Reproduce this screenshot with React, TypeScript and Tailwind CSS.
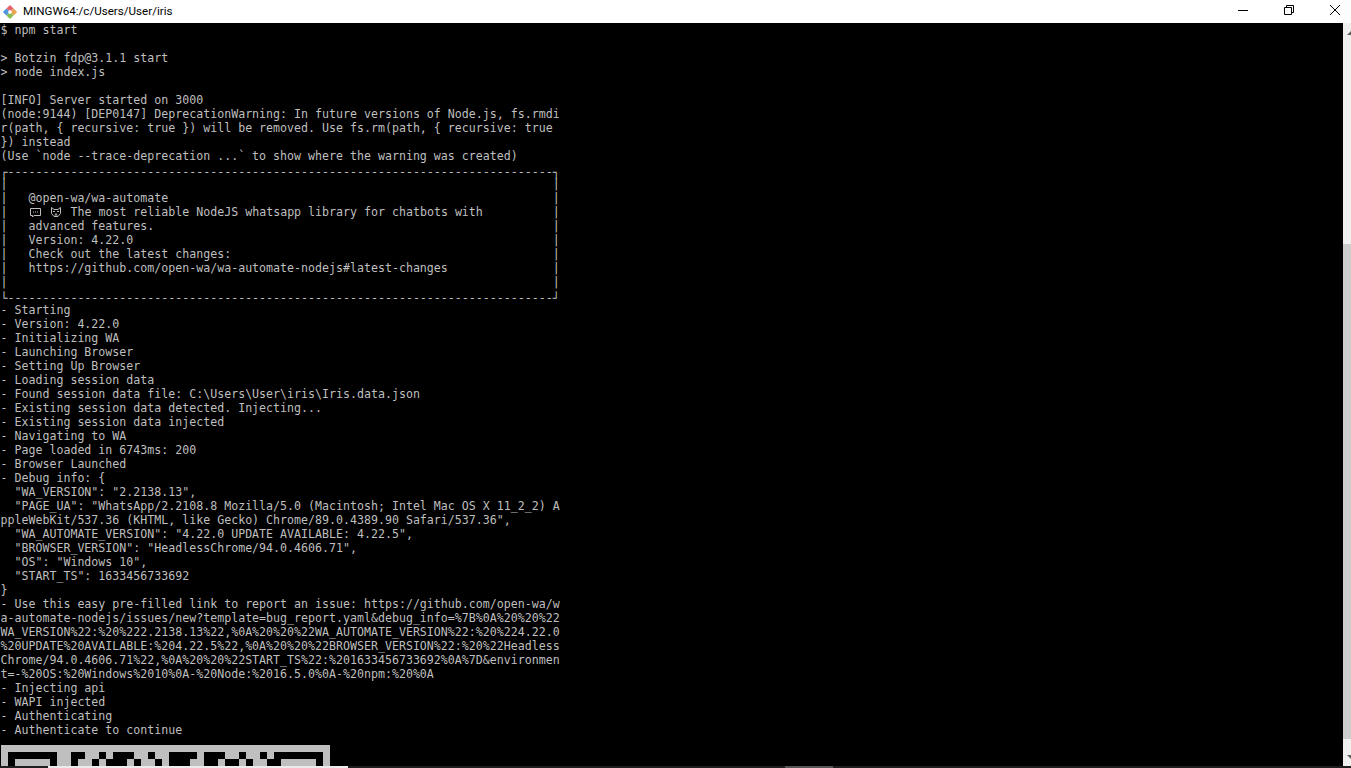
const top = [
  "$ npm start",
  "",
  "> Botzin fdp@3.1.1 start",
  "> node index.js",
  "",
  "[INFO] Server started on 3000",
  "(node:9144) [DEP0147] DeprecationWarning: In future versions of Node.js, fs.rmdi",
  "r(path, { recursive: true }) will be removed. Use fs.rm(path, { recursive: true",
  "}) instead",
  "(Use `node --trace-deprecation ...` to show where the warning was created)",
];

const bottom = [
  "- Starting",
  "- Version: 4.22.0",
  "- Initializing WA",
  "- Launching Browser",
  "- Setting Up Browser",
  "- Loading session data",
  "- Found session data file: C:\\Users\\User\\iris\\Iris.data.json",
  "- Existing session data detected. Injecting...",
  "- Existing session data injected",
  "- Navigating to WA",
  "- Page loaded in 6743ms: 200",
  "- Browser Launched",
  "- Debug info: {",
  '  "WA_VERSION": "2.2138.13",',
  '  "PAGE_UA": "WhatsApp/2.2108.8 Mozilla/5.0 (Macintosh; Intel Mac OS X 11_2_2) A',
  'ppleWebKit/537.36 (KHTML, like Gecko) Chrome/89.0.4389.90 Safari/537.36",',
  '  "WA_AUTOMATE_VERSION": "4.22.0 UPDATE AVAILABLE: 4.22.5",',
  '  "BROWSER_VERSION": "HeadlessChrome/94.0.4606.71",',
  '  "OS": "Windows 10",',
  '  "START_TS": 1633456733692',
  "}",
  "- Use this easy pre-filled link to report an issue: https://github.com/open-wa/w",
  "a-automate-nodejs/issues/new?template=bug_report.yaml&debug_info=%7B%0A%20%20%22",
  "WA_VERSION%22:%20%222.2138.13%22,%0A%20%20%22WA_AUTOMATE_VERSION%22:%20%224.22.0",
  "%20UPDATE%20AVAILABLE:%204.22.5%22,%0A%20%20%22BROWSER_VERSION%22:%20%22Headless",
  "Chrome/94.0.4606.71%22,%0A%20%20%22START_TS%22:%201633456733692%0A%7D&environmen",
  "t=-%20OS:%20Windows%2010%0A-%20Node:%2016.5.0%0A-%20npm:%20%0A",
  "- Injecting api",
  "- WAPI injected",
  "- Authenticating",
  "- Authenticate to continue",
];

const boxRow = (t: string) => ("|   " + t).padEnd(79, " ") + "|";
const dash = "-".repeat(78);

const qrRow2: [number, number][] = [[1, 8], [10, 12], [14, 15], [16, 19], [21, 22], [24, 28], [29, 32], [34, 35], [37, 38], [39, 46]];
const qrRow3: [number, number][] = [[1, 2], [7, 8], [10, 11], [13, 14], [15, 18], [19, 20], [22, 23], [24, 27], [29, 31], [32, 34], [35, 36], [38, 39], [39, 40], [45, 46]];

function Line({ children }: { children?: React.ReactNode }) {
  return <div className="h-[14px] leading-[14px] whitespace-pre">{children}</div>;
}

function GitLogo() {
  return (
    <svg width="16" height="16" viewBox="0 0 18 18" className="shrink-0">
      <path d="M9 1 L13 5 L9 9 L5 5 Z" fill="#e8606a" />
      <path d="M5 5 L9 9 L5 13 L1 9 Z" fill="#4f96dc" />
      <path d="M13 5 L17 9 L13 13 L9 9 Z" fill="#e9a24f" />
      <path d="M9 9 L13 13 L9 17 L5 13 Z" fill="#86bf4f" />
      <path d="M9 6.5 L11.5 9 L9 11.5 L6.5 9 Z" fill="#ffffff" />
    </svg>
  );
}

function Bubble() {
  return (
    <svg width="14" height="14" viewBox="0 0 14 14" className="inline-block align-top" fill="none" stroke="#bfbfbf" strokeWidth="1">
      <path d="M2.5 3.5 H12.5 V10.5 H6 L4.5 12 V10.5 H2.5 Z" />
      <path d="M5 7 H6 M7 7 H8 M9 7 H10" />
    </svg>
  );
}

function Cat() {
  return (
    <svg width="14" height="14" viewBox="0 0 14 14" className="inline-block align-top" fill="none" stroke="#bfbfbf" strokeWidth="1">
      <path d="M2.5 2.5 L5 4.5 H9 L11.5 2.5 V8.5 L9 11.5 H5 L2.5 8.5 Z" />
      <path d="M4 6.5 H6 M8 6.5 H10 M6 9 H8 M5.5 10 H8.5" />
    </svg>
  );
}

export default function App() {
  return (
    <div className="h-screen w-full overflow-hidden flex flex-col bg-black">
      <div className="h-[23px] shrink-0 bg-white flex items-center">
        <div className="pl-[2px] pr-[5px] flex items-center">
          <GitLogo />
        </div>
        <span className="text-[11.6px] pt-[1px] text-black font-['Roboto',sans-serif]">MINGW64:/c/Users/User/iris</span>
        <div className="ml-auto flex items-center pr-[11px] pb-[3px] gap-[36px]">
          <svg width="11" height="10" viewBox="0 0 11 10" stroke="#000" fill="none">
            <path d="M1 5.5 H11" />
          </svg>
          <svg width="10" height="10" viewBox="0 0 10 10" stroke="#000" fill="none">
            <path d="M0.5 2.5 H7.5 V9.5 H0.5 Z M2.5 2.5 V0.5 H9.5 V7.5 H7.5" />
          </svg>
          <svg width="10" height="10" viewBox="0 0 10 10" stroke="#000" fill="none">
            <path d="M0 0 L10 10 M10 0 L0 10" />
          </svg>
        </div>
      </div>
      <div className="flex-1 min-h-0 flex">
        <div className="flex-1 min-w-0 overflow-hidden bg-black text-[#bfbfbf] text-[11.62px] pl-[0.5px] font-['DejaVu_Sans_Mono',monospace]">
          {top.map((l, i) => (
            <Line key={i}>{l}</Line>
          ))}
          <Line>
            <span className="inline-block translate-y-[2px]">{"┌" + dash + "┐"}</span>
          </Line>
          <Line>{boxRow("")}</Line>
          <Line>{boxRow("@open-wa/wa-automate")}</Line>
          <Line>
            {"|   "}
            <Bubble /> <Cat />
            {" The most reliable NodeJS whatsapp library for chatbots with".padEnd(70, " ") + "|"}
          </Line>
          <Line>{boxRow("advanced features.")}</Line>
          <Line>{boxRow("Version: 4.22.0")}</Line>
          <Line>{boxRow("Check out the latest changes:")}</Line>
          <Line>{boxRow("https://github.com/open-wa/wa-automate-nodejs#latest-changes")}</Line>
          <Line>{boxRow("")}</Line>
          <Line>
            <span className="inline-block translate-y-[2px]">{"└" + dash + "┘"}</span>
          </Line>
          {bottom.map((l, i) => (
            <Line key={i}>{l}</Line>
          ))}
          <div className="pt-[8px] pl-[0.5px]">
            <svg width="329" height="21" viewBox="0 0 47 3" shapeRendering="crispEdges" className="block">
              <rect x="0" y="0" width="47" height="3" fill="#bfbfbf" />
              {qrRow2.map(([a, b], i) => (
                <rect key={i} x={a} y={1} width={b - a} height={1} fill="#000" />
              ))}
              {qrRow3.map(([a, b], i) => (
                <rect key={i} x={a} y={2} width={b - a} height={1} fill="#000" />
              ))}
            </svg>
          </div>
        </div>
        <div className="w-[8px] shrink-0 bg-[#f0f0f0] flex flex-col">
          <div className="h-[221px] shrink-0 pt-[7px] pl-[4px]">
            <svg width="4" height="6" viewBox="0 0 4 6" className="block">
              <path d="M0 5 L4 1 V5 Z" fill="#606060" />
            </svg>
          </div>
          <div className="h-[495px] shrink-0 bg-[#cdcdcd]" />
          <div className="flex-1 flex flex-col justify-end pb-[6px] pl-[4px]">
            <svg width="4" height="6" viewBox="0 0 4 6" className="block">
              <path d="M0 1 L4 5 V1 Z" fill="#606060" />
            </svg>
          </div>
        </div>
      </div>
      <div className="h-[2px] shrink-0 flex bg-[#1f1f1f]">
        <div className="w-[48px]" />
        <div className="w-[300px] bg-[#ececec]" />
        <div className="w-[437px]" />
        <div className="w-[48px] bg-[#555555]" />
      </div>
    </div>
  );
}
